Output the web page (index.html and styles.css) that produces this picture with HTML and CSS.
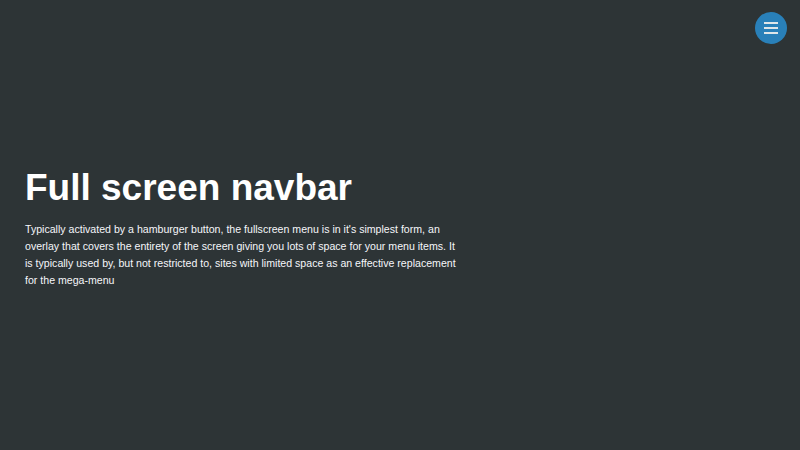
FILE: index.html
```html
<!DOCTYPE html>
<html lang="en">
<head>
<meta charset="utf-8">
<title>Full screen navbar</title>
<link rel="stylesheet" href="styles.css">
</head>
<body>
<button class="menu-btn" aria-label="Open menu">
  <span class="bar"></span><span class="bar"></span><span class="bar"></span>
</button>
<main class="hero">
  <h1 class="title">Full screen navbar</h1>
  <p class="lead">Typically activated by a hamburger button, the fullscreen menu is in it's simplest form, an overlay that covers the entirety of the screen giving you lots of space for your menu items. It is typically used by, but not restricted to, sites with limited space as an effective replacement for the mega-menu</p>
</main>
</body>
</html>
```

FILE: styles.css
```css
html, body {
  margin: 0;
  height: 100%;
}
body {
  background: #2d3436;
  color: #ffffff;
  font-family: "Liberation Sans", Arial, sans-serif;
  overflow: hidden;
}
.menu-btn {
  position: absolute;
  top: 12px;
  right: 13px;
  width: 32px;
  height: 32px;
  border-radius: 50%;
  border: none;
  background: #2980b9;
  padding: 0;
  display: flex;
  flex-direction: column;
  align-items: center;
  justify-content: center;
  gap: 3px;
  cursor: pointer;
}
.bar {
  display: block;
  width: 14px;
  height: 2px;
  background: #dfe6e9;
}
.hero {
  height: 100%;
  box-sizing: border-box;
  display: flex;
  flex-direction: column;
  justify-content: center;
  padding: 4px 25px 0;
}
.title {
  margin: 0 0 12px;
  font-size: 37px;
  font-weight: 700;
  line-height: 43px;
}
.lead {
  margin: 0;
  max-width: 436px;
  font-size: 10.6px;
  line-height: 17px;
  color: #f5f6fa;
}
```
